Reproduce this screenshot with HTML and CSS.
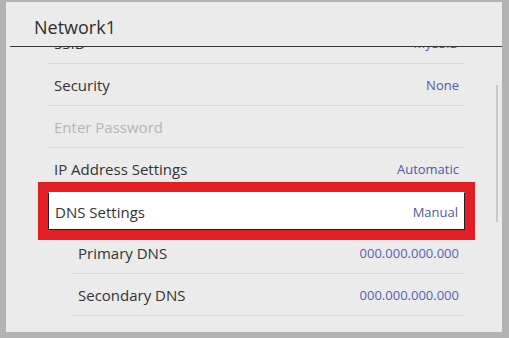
FILE: index.html
```html
<!DOCTYPE html>
<html lang="en">
<head>
    <meta charset="UTF-8">
    <meta name="viewport" content="width=device-width, initial-scale=1.0">
    <title>Network1</title>
    <link rel="stylesheet" href="styles.css">
</head>
<body>

    <div class="panel">
        <div class="header">
            <h1>Network1</h1>
        </div>

        <div class="list">
            <div class="rows">
                <div class="row">
                    <span class="label">SSID</span>
                    <span class="value">MySSID</span>
                </div>
                <div class="row">
                    <span class="label">Security</span>
                    <span class="value">None</span>
                </div>
                <div class="row">
                    <span class="label muted">Enter Password</span>
                </div>
                <div class="row">
                    <span class="label">IP Address Settings</span>
                    <span class="value">Automatic</span>
                </div>
                <div class="row selected">
                    <span class="label">DNS Settings</span>
                    <span class="value">Manual</span>
                </div>
                <div class="row sub">
                    <span class="label">Primary DNS</span>
                    <span class="value dns">000.000.000.000</span>
                </div>
                <div class="row sub">
                    <span class="label">Secondary DNS</span>
                    <span class="value dns">000.000.000.000</span>
                </div>
            </div>
        </div>

        <div class="scrollbar"></div>
    </div>

</body>
</html>
```

FILE: styles.css
```css
/* colours */
:root {
    --bg-color: #b3b3b3;
    --panel-color: #ebebeb;
    --text-color: #333;
    --muted-color: #b5b5b5;
    --value-color: #5256ac;
    --line-color: #d9d9d9;
    --mark-color: #e31e24;
    --font-family: "Open Sans", "Noto Sans", "Liberation Sans", sans-serif;
}

* {
    margin: 0;
    padding: 0;
    box-sizing: border-box;
}

body {
    font-family: var(--font-family);
    background: var(--bg-color);
    color: var(--text-color);
    width: 509px;
    height: 338px;
    overflow: hidden;
}

/* main panel */
.panel {
    position: relative;
    margin: 2px 0 0 6px;
    width: 496px;
    height: 330px;
    background: var(--panel-color);
    display: flex;
    flex-direction: column;
}

.header {
    height: 45px;
    margin-left: 4px;
    padding-left: 24px;
    border-bottom: 1px solid #3a3a3a;
    display: flex;
    align-items: center;
}

.header h1 {
    font-size: 18px;
    font-weight: 400;
    padding-top: 6px;
    color: #2e2e2e;
}

/* settings list */
.list {
    flex: 1;
    overflow: hidden;
}

.rows {
    margin: -25px 37px 0 42px;
}

.row {
    height: 42px;
    padding: 0 6px;
    border-bottom: 1px solid var(--line-color);
    display: flex;
    justify-content: space-between;
    align-items: center;
}

.label {
    font-size: 15px;
}

.label.muted {
    color: var(--muted-color);
}

.value {
    font-size: 13px;
    color: var(--value-color);
}

.value.dns {
    color: #5660bd;
}

.row.sub {
    margin-left: 24px;
}

.row.sub .label {
    padding-left: 0;
}

/* highlighted row */
.row.selected {
    position: relative;
    z-index: 1;
    height: 38px;
    margin: 2px 0;
    padding-top: 1px;
    background: #fff;
    border: 1px solid #222;
    border-top-color: #fff;
    box-shadow: 0 0 0 10px var(--mark-color);
}

.row.selected + .row {
    border-top: 0;
}

/* scroll indicator */
.scrollbar {
    position: absolute;
    left: 490px;
    top: 83px;
    width: 2px;
    height: 137px;
    background: #c9c9c9;
}
```
